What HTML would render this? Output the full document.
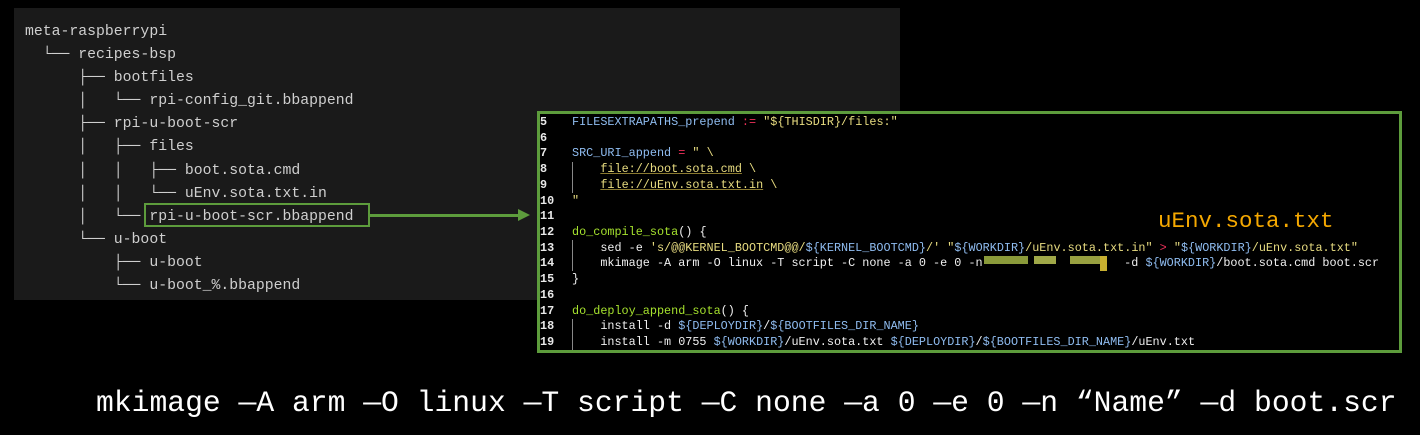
<!DOCTYPE html>
<html><head><meta charset="utf-8"><style>
html,body{margin:0;padding:0;background:#000;width:1420px;height:435px;overflow:hidden;position:relative;font-family:"Liberation Mono",monospace}
.panel{position:absolute;left:14px;top:8px;width:886px;height:292px;background:#1a1a1a}
.tree{position:absolute;left:25px;top:21px;font-size:14.8px;line-height:23.1px;color:#cfcfcf;white-space:pre;margin:0;font-family:"Liberation Mono","DejaVu Sans Mono",monospace}
.hl{position:absolute;left:144px;top:203px;width:226px;height:24px;border:2.5px solid #5d9c3c;box-sizing:border-box}
.arrow{position:absolute;left:370px;top:214px;width:152px;height:2.5px;background:#5d9c3c}
.head{position:absolute;left:518px;top:209px;width:0;height:0;border-left:12px solid #5d9c3c;border-top:6px solid transparent;border-bottom:6px solid transparent}
.code{position:absolute;left:537px;top:111px;width:865px;height:242px;border:3px solid #5d9c3c;box-sizing:border-box;background:#000}
.lines{position:absolute;left:0;top:1px;margin:0;font-size:11.8px;line-height:15.72px;color:#f0f0f0;white-space:pre;font-family:"Liberation Mono",monospace}
.n{display:inline-block;width:32px;color:#e8e8e8;font-weight:bold}
.v{color:#8fbcf0}.s{color:#e8dc80}.k{color:#f0305a}.f{color:#a6e22e}.u{color:#e8dc80;text-decoration:underline;text-decoration-color:#8a7a30}
.g{position:absolute;left:32px;width:1px;background:#888}
.orange{position:absolute;left:1158px;top:208px;font-size:22.5px;color:#f5a800}
.bottom{position:absolute;left:96px;top:386px;font-size:29.7px;color:#fff;white-space:pre}
.b{position:absolute;height:8px}
</style></head><body>
<div class="panel"></div>
<pre class="tree">meta-raspberrypi
  └── recipes-bsp
      ├── bootfiles
      │   └── rpi-config_git.bbappend
      ├── rpi-u-boot-scr
      │   ├── files
      │   │   ├── boot.sota.cmd
      │   │   └── uEnv.sota.txt.in
      │   └── rpi-u-boot-scr.bbappend
      └── u-boot
          ├── u-boot
          └── u-boot_%.bbappend</pre>
<div class="hl"></div><div class="arrow"></div><div class="head"></div>
<div class="code">
<div class="g" style="top:48px;height:31px"></div>
<div class="g" style="top:126px;height:31px"></div>
<div class="g" style="top:205px;height:31px"></div>
<pre class="lines"><span class="n">5</span><span class="v">FILESEXTRAPATHS_prepend</span> <span class="k">:=</span> <span class="s">"${THISDIR}/files:"</span>
<span class="n">6</span>
<span class="n">7</span><span class="v">SRC_URI_append</span> <span class="k">=</span> <span class="s">" \</span>
<span class="n">8</span>    <span class="u">file://boot.sota.cmd</span> <span class="s">\</span>
<span class="n">9</span>    <span class="u">file://uEnv.sota.txt.in</span> <span class="s">\</span>
<span class="n">10</span><span class="s">"</span>
<span class="n">11</span>
<span class="n">12</span><span class="f">do_compile_sota</span>() {
<span class="n">13</span>    sed -e <span class="s">'s/@@KERNEL_BOOTCMD@@/</span><span class="v">${KERNEL_BOOTCMD}</span><span class="s">/'</span> <span class="s">"</span><span class="v">${WORKDIR}</span><span class="s">/uEnv.sota.txt.in"</span> <span class="k">&gt;</span> <span class="s">"</span><span class="v">${WORKDIR}</span><span class="s">/uEnv.sota.txt"</span>
<span class="n">14</span>    mkimage -A arm -O linux -T script -C none -a 0 -e 0 -n                    -d <span class="v">${WORKDIR}</span>/boot.sota.cmd boot.scr
<span class="n">15</span>}
<span class="n">16</span>
<span class="n">17</span><span class="f">do_deploy_append_sota</span>() {
<span class="n">18</span>    install -d <span class="v">${DEPLOYDIR}</span>/<span class="v">${BOOTFILES_DIR_NAME}</span>
<span class="n">19</span>    install -m 0755 <span class="v">${WORKDIR}</span>/uEnv.sota.txt <span class="v">${DEPLOYDIR}</span>/<span class="v">${BOOTFILES_DIR_NAME}</span>/uEnv.txt</pre>
</div>
<div class="b" style="left:984px;top:256px;width:44px;background:#8a9a3a"></div>
<div class="b" style="left:1034px;top:256px;width:22px;background:#a0a848"></div>
<div class="b" style="left:1070px;top:256px;width:35px;background:#98a040"></div>
<div class="b" style="left:1100px;top:256px;width:7px;height:15px;background:#c8b030"></div>
<div class="orange">uEnv.sota.txt</div>
<div class="bottom">mkimage —A arm —O linux —T script —C none —a 0 —e 0 —n “Name” —d boot.scr</div>
</body></html>
